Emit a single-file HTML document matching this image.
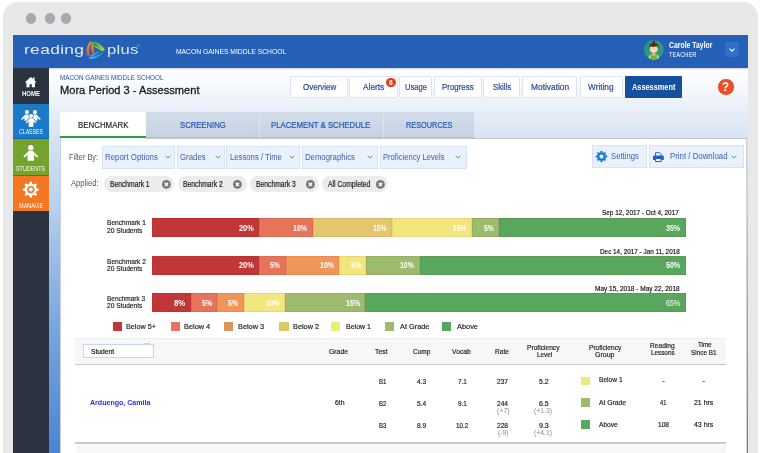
<!DOCTYPE html>
<html lang="en"><head><meta charset="utf-8"><title>Reading Plus - Assessment</title>
<style>
html,body{margin:0;padding:0;background:#fff;}
body{width:760px;height:453px;overflow:hidden;position:relative;font-family:"Liberation Sans",sans-serif;}
.b{position:absolute;box-sizing:border-box;}
.t{position:absolute;white-space:nowrap;line-height:1;transform-origin:0 0;font-family:"Liberation Sans",sans-serif;}
svg{position:absolute;overflow:visible;}
</style></head><body>
<div id="app" style="position:absolute;left:0;top:0;width:760px;height:453px;will-change:transform;">
<div class="b" style="left:3.10px;top:1.90px;width:754.90px;height:468.10px;background:#e8e8e8;border-radius:15px;"></div>
<div class="b" style="left:25.95px;top:13.30px;width:10.30px;height:10.30px;background:#a7a9ad;border-radius:50%;"></div>
<div class="b" style="left:44.55px;top:13.30px;width:10.30px;height:10.30px;background:#a7a9ad;border-radius:50%;"></div>
<div class="b" style="left:60.85px;top:13.30px;width:10.30px;height:10.30px;background:#a7a9ad;border-radius:50%;"></div>
<div class="b" style="left:13.00px;top:35.00px;width:735.00px;height:418.00px;background:#fff;background:linear-gradient(to bottom,#ffffff 33px,#fdfeff 40px,#d6e3f3 103px,#b5cfee 176px,#a4c4e8 201px,#74a4dd 301px,#4a85d3 418px);"></div>
<div class="b" style="left:48.50px;top:68.00px;width:699.50px;height:2.20px;background:transparent;background:linear-gradient(to bottom,rgba(60,70,90,0.25),rgba(60,70,90,0));"></div>
<div class="b" style="left:13.00px;top:35.00px;width:735.00px;height:33.00px;background:#2560b6;"></div>
<span class="t" style="left:24.19px;top:43px;font-size:13.3px;color:rgba(255,255,255,0.86);transform:scaleX(1.3091);letter-spacing:0.25px;">reading</span>
<span class="t" style="left:106.85px;top:43px;font-size:13.3px;color:rgba(255,255,255,0.86);transform:scaleX(1.2500);letter-spacing:0.25px;">plus</span>
<svg style="left:85.8px;top:40.9px" width="19" height="18.5" viewBox="0 0 38 37">
<defs>
<linearGradient id="lo" x1="0" y1="0" x2="0" y2="1"><stop offset="0" stop-color="#f9a01b"/><stop offset="1" stop-color="#ef4b23"/></linearGradient>
<linearGradient id="lg" x1="0" y1="0" x2="1" y2="0.6"><stop offset="0" stop-color="#1f9a48"/><stop offset="1" stop-color="#c6d92d"/></linearGradient>
<linearGradient id="lb" x1="1" y1="0" x2="0" y2="0.6"><stop offset="0" stop-color="#1c75bc"/><stop offset="1" stop-color="#35c0f0"/></linearGradient>
</defs>
<path d="M9 0.5 C2 8 -2 22 4 31 L8.500 29 C5 22 6 10 11.500 2 Z M12.500 1.500 C9 9 10 20 14 26.500 L18 24.500 C14.500 18 14 9 16 2.500 Z" fill="url(#lo)"/>
<path d="M12 0 C22 1.500 31.500 8 37.500 17 L35 19.500 C29 11.500 21 6.500 12.500 4.500 Z M13.500 7.500 C22 9 29 13 35.500 19.500 L33 21.500 C27.500 16.500 21 13 13.500 12 Z" fill="url(#lg)"/>
<path d="M37.500 18.500 C32 28.500 20 37 5.500 35.500 L8 31.800 C19 32.500 28 26.500 33 19 Z M27 20 C23 26.500 16 30.500 8 31.300 L10.500 27.600 C16 26.800 20.500 24 23 19.600 Z" fill="url(#lb)"/>
</svg>
<span class="t" style="left:175.70px;top:48px;font-size:7.4px;color:#ffffff;transform:scaleX(0.9125);">MACON GAINES MIDDLE SCHOOL</span>
<span class="t" style="left:136.90px;top:46px;font-size:2.6px;color:rgba(255,255,255,0.6);transform:scaleX(1.4000);">®</span>
<svg style="left:643.9px;top:40.1px" width="19.6" height="19.6" viewBox="0 0 40 40">
<defs><clipPath id="av"><circle cx="20" cy="20" r="20"/></clipPath></defs>
<circle cx="20" cy="20" r="20" fill="#2a9a85"/>
<g clip-path="url(#av)">
<circle cx="20" cy="4" r="2.800" fill="#5b2d1b"/>
<path d="M9.500 36 C9.500 31 12 29.500 15 29.500 L25 29.500 C28 29.500 30.500 31 30.500 36 L30.500 41 L9.500 41 Z" fill="#f1c9a0"/>
<path d="M13 41 L13 31 C13 30 14 29.600 15 29.600 C16 32.500 24 32.500 25 29.600 C26 29.600 27 30 27 31 L27 41 Z" fill="#6fb83a"/>
<path d="M17.200 24 L22.800 24 L22.800 29.800 C22 31.500 18 31.500 17.200 29.800 Z" fill="#e9b98f"/>
<ellipse cx="20" cy="18.200" rx="8.400" ry="7.400" fill="#f6d3ad"/>
<path d="M10.800 18.500 C9.500 9 14.500 5 20 5 C25.500 5 30.500 9 29.200 18.500 C28.500 15.500 27 13.500 25.500 12.800 C22 14.500 16 14.500 14.200 13 C12.800 14 11.500 15.800 10.800 18.500 Z" fill="#5b2d1b"/>
<path d="M17.800 22 C19 23.300 21 23.300 22.200 22 C21 22.600 19 22.600 17.800 22 Z" fill="#fff" stroke="#fff" stroke-width="0.6"/>
</g></svg>
<span class="t" style="left:669.00px;top:41px;font-size:8.4px;color:#ffffff;font-weight:700;transform:scaleX(0.8208);">Carole Taylor</span>
<span class="t" style="left:669.00px;top:52px;font-size:6.6px;color:#ffffff;transform:scaleX(0.8710);">TEACHER</span>
<div class="b" style="left:724.80px;top:42.30px;width:14.20px;height:14.70px;background:#2f70c8;border-radius:2px;"></div>
<svg style="left:728.9px;top:47.6px" width="6" height="4" viewBox="0 0 6 4"><path d="M0.6 0.7 L3 3.100 L5.400 0.7" fill="none" stroke="#fff" stroke-width="1.100"/></svg>
<div class="b" style="left:13.00px;top:68.00px;width:35.50px;height:385.00px;background:#2c323f;"></div>
<div class="b" style="left:13.00px;top:103.50px;width:35.50px;height:35.80px;background:#1b79c9;border-bottom:1px solid #1565a9;"></div>
<div class="b" style="left:13.00px;top:139.30px;width:35.50px;height:36.30px;background:#76a22e;border-bottom:1px solid #4f7a2a;"></div>
<div class="b" style="left:13.00px;top:175.60px;width:35.50px;height:35.50px;background:#f47721;"></div>
<svg style="left:24.6px;top:76.8px" width="11.4" height="10.200" viewBox="0 0 28 25"><path d="M14 0 L19.500 5 L19.500 1.500 L23.500 1.500 L23.500 8.600 L28 12.700 L26.600 14.300 L24.500 12.600 L24.500 25 L16.800 25 L16.800 17.500 L11.200 17.500 L11.200 25 L3.500 25 L3.500 12.600 L1.400 14.300 L0 12.700 Z" fill="#fff"/></svg>
<span class="t" style="left:21.90px;top:91px;font-size:6.4px;color:#ffffff;font-weight:700;transform:scaleX(0.9421);">HOME</span>
<svg style="left:13px;top:103.5px" width="35.700" height="36" viewBox="0 0 35.700 36"><g transform="translate(13.9,6.0) scale(0.95)" fill="#fff"><circle cx="0" cy="2.200" r="2.200"/><path d="M-1.700 4.700 L1.700 4.700 L6.200 9.500 L5.100 10.500 L2.700 8.100 L2.700 11.2 L-2.700 11.2 L-2.700 8.100 L-5.100 10.500 L-6.200 9.500 Z"/></g><g transform="translate(21.9,6.0) scale(0.95)" fill="#fff"><circle cx="0" cy="2.200" r="2.200"/><path d="M-1.700 4.700 L1.700 4.700 L6.200 9.500 L5.100 10.500 L2.700 8.100 L2.700 11.2 L-2.700 11.2 L-2.700 8.100 L-5.100 10.500 L-6.200 9.500 Z"/></g><g stroke="#1b79c9" stroke-width="1.400"><g transform="translate(18.1,10.1) scale(0.88)" fill="#fff"><circle cx="0" cy="2.200" r="2.200"/><path d="M-1.700 4.700 L1.700 4.700 L6.200 9.500 L5.100 10.500 L2.700 8.100 L2.700 14.4 L-2.700 14.4 L-2.700 8.100 L-5.100 10.500 L-6.200 9.500 Z"/></g></g><g transform="translate(18.1,10.1) scale(0.88)" fill="#fff"><circle cx="0" cy="2.200" r="2.200"/><path d="M-1.700 4.700 L1.700 4.700 L6.200 9.500 L5.100 10.500 L2.700 8.100 L2.700 14.4 L-2.700 14.4 L-2.700 8.100 L-5.100 10.500 L-6.200 9.500 Z"/></g></svg>
<span class="t" style="left:19.10px;top:129px;font-size:6.6px;color:#ffffff;transform:scaleX(0.7867);">CLASSES</span>
<svg style="left:13px;top:139.3px" width="35.700" height="36" viewBox="0 0 35.700 36"><g transform="translate(17.8,6.0) scale(1.2)" fill="#fff"><circle cx="0" cy="2.200" r="2.200"/><path d="M-1.700 4.700 L1.700 4.700 L6.200 9.500 L5.100 10.500 L2.700 8.100 L2.700 13.1 L-2.700 13.1 L-2.700 8.100 L-5.100 10.500 L-6.200 9.500 Z"/></g></svg>
<span class="t" style="left:16.40px;top:166px;font-size:6.6px;color:#ffffff;transform:scaleX(0.8171);">STUDENTS</span>
<svg style="left:13px;top:175.600px" width="35.700" height="36" viewBox="0 0 35.700 36"><path d="M16.40 7.77 L16.75 5.77 L18.85 5.77 L19.20 7.77 L20.93 8.48 L22.59 7.32 L24.08 8.81 L22.92 10.47 L23.63 12.20 L25.63 12.55 L25.63 14.65 L23.63 15.00 L22.92 16.73 L24.08 18.39 L22.59 19.88 L20.93 18.72 L19.20 19.43 L18.85 21.43 L16.75 21.43 L16.40 19.43 L14.67 18.72 L13.01 19.88 L11.52 18.39 L12.68 16.73 L11.97 15.00 L9.97 14.65 L9.97 12.55 L11.97 12.20 L12.68 10.47 L11.52 8.81 L13.01 7.32 L14.67 8.48 Z" fill="#fff"/><circle cx="17.8" cy="13.6" r="3.700" fill="#f47721"/><circle cx="17.8" cy="13.6" r="2.000" fill="#fff"/></svg>
<span class="t" style="left:19.00px;top:203px;font-size:6.6px;color:#ffffff;transform:scaleX(0.8429);">MANAGE</span>
<span class="t" style="left:59.60px;top:75px;font-size:6.9px;color:#2450ad;transform:scaleX(0.9188);">MACON GAINES MIDDLE SCHOOL</span>
<span class="t" style="left:59.60px;top:85px;font-size:10.6px;color:#1a1a1a;transform:scaleX(1.0481);-webkit-text-stroke:0.3px #1a1a1a;">Mora Period 3 - Assessment</span>
<div class="b" style="left:290.40px;top:75.60px;width:57.20px;height:22.40px;background:#ffffff;border:1px solid #dae4f3;border-radius:2px;"></div>
<span class="t" style="left:302.60px;top:83px;font-size:8.4px;color:#2b4b98;transform:scaleX(0.9543);-webkit-text-stroke:0.2px #2b4b98;">Overview</span>
<div class="b" style="left:349.20px;top:75.60px;width:48.40px;height:22.40px;background:#ffffff;border:1px solid #dae4f3;border-radius:2px;"></div>
<span class="t" style="left:363.00px;top:83px;font-size:8.4px;color:#2b4b98;transform:scaleX(0.9905);-webkit-text-stroke:0.2px #2b4b98;">Alerts</span>
<div class="b" style="left:399.20px;top:75.60px;width:33.20px;height:22.40px;background:#ffffff;border:1px solid #dae4f3;border-radius:2px;"></div>
<span class="t" style="left:405.20px;top:83px;font-size:8.4px;color:#2b4b98;transform:scaleX(0.9083);-webkit-text-stroke:0.2px #2b4b98;">Usage</span>
<div class="b" style="left:434.20px;top:75.60px;width:47.60px;height:22.40px;background:#ffffff;border:1px solid #dae4f3;border-radius:2px;"></div>
<span class="t" style="left:442.40px;top:83px;font-size:8.4px;color:#2b4b98;transform:scaleX(0.9455);-webkit-text-stroke:0.2px #2b4b98;">Progress</span>
<div class="b" style="left:483.40px;top:75.60px;width:36.20px;height:22.40px;background:#ffffff;border:1px solid #dae4f3;border-radius:2px;"></div>
<span class="t" style="left:493.00px;top:83px;font-size:8.4px;color:#2b4b98;transform:scaleX(0.9263);-webkit-text-stroke:0.2px #2b4b98;">Skills</span>
<div class="b" style="left:522.40px;top:75.60px;width:55.00px;height:22.40px;background:#ffffff;border:1px solid #dae4f3;border-radius:2px;"></div>
<span class="t" style="left:531.00px;top:83px;font-size:8.4px;color:#2b4b98;transform:scaleX(1.0000);-webkit-text-stroke:0.2px #2b4b98;">Motivation</span>
<div class="b" style="left:579.60px;top:75.60px;width:43.00px;height:22.40px;background:#ffffff;border:1px solid #dae4f3;border-radius:2px;"></div>
<span class="t" style="left:588.40px;top:83px;font-size:8.4px;color:#2b4b98;transform:scaleX(0.9846);-webkit-text-stroke:0.2px #2b4b98;">Writing</span>
<div class="b" style="left:624.80px;top:76.20px;width:57.20px;height:21.40px;background:#15509e;border-radius:1px;"></div>
<span class="t" style="left:632.00px;top:84px;font-size:8.2px;color:#ffffff;font-weight:700;transform:scaleX(0.9000);">Assessment</span>
<div class="b" style="left:386.40px;top:77.80px;width:9.60px;height:9.60px;background:#e63e15;border-radius:50%;"></div>
<span class="t" style="left:389.30px;top:80px;font-size:6.9px;color:#ffffff;font-weight:700;transform:scaleX(0.9500);">8</span>
<div class="b" style="left:717.40px;top:78.30px;width:17.40px;height:17.40px;background:#e9502a;border-radius:50%;border:1px solid #fff;"></div>
<span class="t" style="left:722.48px;top:81px;font-size:12.6px;color:#ffffff;font-weight:700;transform:scaleX(0.9167);">?</span>
<div class="b" style="left:59.50px;top:112.00px;width:86.90px;height:26.40px;background:#ffffff;border-bottom:2.600px solid #2f9e3c;"></div>
<div class="b" style="left:146.40px;top:112.00px;width:328.00px;height:26.40px;background:#ccd7e5;background:linear-gradient(to bottom,#d3dde9,#c6d2e3);border-bottom:1px solid #b4bfcf;"></div>
<div class="b" style="left:258.60px;top:112.00px;width:1.00px;height:25.50px;background:#dbe4f0;"></div>
<div class="b" style="left:383.10px;top:112.00px;width:1.00px;height:25.50px;background:#dbe4f0;"></div>
<span class="t" style="left:77.60px;top:121px;font-size:8.3px;color:#222222;transform:scaleX(0.9509);-webkit-text-stroke:0.15px #222;">BENCHMARK</span>
<span class="t" style="left:180.00px;top:121px;font-size:8.3px;color:#2657b6;transform:scaleX(0.9265);-webkit-text-stroke:0.2px #2657b6;">SCREENING</span>
<span class="t" style="left:271.40px;top:121px;font-size:8.3px;color:#2657b6;transform:scaleX(0.9377);-webkit-text-stroke:0.2px #2657b6;">PLACEMENT &amp; SCHEDULE</span>
<span class="t" style="left:406.00px;top:121px;font-size:8.3px;color:#2657b6;transform:scaleX(0.8846);-webkit-text-stroke:0.2px #2657b6;">RESOURCES</span>
<div class="b" style="left:59.50px;top:138.40px;width:687.30px;height:314.60px;background:#ffffff;border-left:1px solid #c9d0da;border-right:1px solid #cfd4db;"></div>
<div class="b" style="left:146.40px;top:137.90px;width:600.30px;height:0.80px;background:#c2c5c9;"></div>
<span class="t" style="left:69.00px;top:153px;font-size:8.4px;color:#555555;transform:scaleX(0.8788);">Filter By:</span>
<div class="b" style="left:102.40px;top:146.20px;width:72.80px;height:22.60px;background:#e9f1fc;border:1px solid #d4e2f6;"></div>
<span class="t" style="left:105.40px;top:153px;font-size:8.4px;color:#3f60ae;transform:scaleX(0.9393);">Report Options</span>
<svg style="left:164.60px;top:155.30px" width="6" height="4" viewBox="0 0 6 4"><path d="M0.6 0.7 L3 3.100 L5.400 0.7" fill="none" stroke="#4aa84e" stroke-width="0.950"/></svg>
<div class="b" style="left:177.40px;top:146.20px;width:47.20px;height:22.60px;background:#e9f1fc;border:1px solid #d4e2f6;"></div>
<span class="t" style="left:180.00px;top:153px;font-size:8.4px;color:#3f60ae;transform:scaleX(0.9333);">Grades</span>
<svg style="left:214.60px;top:155.30px" width="6" height="4" viewBox="0 0 6 4"><path d="M0.6 0.7 L3 3.100 L5.400 0.7" fill="none" stroke="#4aa84e" stroke-width="0.950"/></svg>
<div class="b" style="left:226.40px;top:146.20px;width:73.60px;height:22.60px;background:#e9f1fc;border:1px solid #d4e2f6;"></div>
<span class="t" style="left:229.60px;top:153px;font-size:8.4px;color:#3f60ae;transform:scaleX(0.9214);">Lessons / Time</span>
<svg style="left:289.40px;top:155.30px" width="6" height="4" viewBox="0 0 6 4"><path d="M0.6 0.7 L3 3.100 L5.400 0.7" fill="none" stroke="#4aa84e" stroke-width="0.950"/></svg>
<div class="b" style="left:302.00px;top:146.20px;width:75.60px;height:22.60px;background:#e9f1fc;border:1px solid #d4e2f6;"></div>
<span class="t" style="left:305.00px;top:153px;font-size:8.4px;color:#3f60ae;transform:scaleX(0.9259);">Demographics</span>
<svg style="left:367.00px;top:155.30px" width="6" height="4" viewBox="0 0 6 4"><path d="M0.6 0.7 L3 3.100 L5.400 0.7" fill="none" stroke="#4aa84e" stroke-width="0.950"/></svg>
<div class="b" style="left:380.00px;top:146.20px;width:87.00px;height:22.60px;background:#e9f1fc;border:1px solid #d4e2f6;"></div>
<span class="t" style="left:383.00px;top:153px;font-size:8.4px;color:#3f60ae;transform:scaleX(0.9104);">Proficiency Levels</span>
<svg style="left:455.40px;top:155.30px" width="6" height="4" viewBox="0 0 6 4"><path d="M0.6 0.7 L3 3.100 L5.400 0.7" fill="none" stroke="#4aa84e" stroke-width="0.950"/></svg>
<div class="b" style="left:591.60px;top:145.20px;width:55.20px;height:22.60px;background:#e9f1fc;border:1px solid #d4e2f6;"></div>
<svg style="left:596.000px;top:150.900px" width="11" height="11" viewBox="0 0 11 11"><path d="M4.52 1.42 L4.77 0.05 L6.23 0.05 L6.48 1.42 L7.69 1.92 L8.84 1.13 L9.87 2.16 L9.08 3.31 L9.58 4.52 L10.95 4.77 L10.95 6.23 L9.58 6.48 L9.08 7.69 L9.87 8.84 L8.84 9.87 L7.69 9.08 L6.48 9.58 L6.23 10.95 L4.77 10.95 L4.52 9.58 L3.31 9.08 L2.16 9.87 L1.13 8.84 L1.92 7.69 L1.42 6.48 L0.05 6.23 L0.05 4.77 L1.42 4.52 L1.92 3.31 L1.13 2.16 L2.16 1.13 L3.31 1.92 Z" fill="#1a7fd1" stroke="#1a7fd1" stroke-width="0.5" stroke-linejoin="round"/><circle cx="5.5" cy="5.5" r="2.000" fill="#e9f1fc"/></svg>
<span class="t" style="left:610.90px;top:153px;font-size:8.2px;color:#3f60ae;transform:scaleX(0.9414);">Settings</span>
<div class="b" style="left:648.70px;top:145.20px;width:95.10px;height:22.60px;background:#e9f1fc;border:1px solid #d4e2f6;"></div>
<svg style="left:652.900px;top:151.500px" width="10.800" height="10.200" viewBox="0 0 22 20">
<path d="M5.200 7 L5.200 1 L14 1 L16.800 3.800 L16.800 7" fill="#f4f8fe" stroke="#1f5fc0" stroke-width="2"/>
<path d="M2.500 7 L19.500 7 Q22 7 22 9.500 L22 16 L0 16 L0 9.500 Q0 7 2.500 7 Z" fill="#1f5fc0"/>
<path d="M5.200 13 L16.800 13 L16.800 19 L5.200 19 Z" fill="#f4f8fe" stroke="#1f5fc0" stroke-width="2"/>
</svg>
<span class="t" style="left:669.50px;top:153px;font-size:8.2px;color:#3f60ae;transform:scaleX(0.9583);">Print / Download</span>
<svg style="left:731.40px;top:154.50px" width="6" height="4" viewBox="0 0 6 4"><path d="M0.6 0.7 L3 3.100 L5.400 0.7" fill="none" stroke="#4aa84e" stroke-width="0.950"/></svg>
<span class="t" style="left:71.00px;top:180px;font-size:8.2px;color:#555555;transform:scaleX(0.9310);">Applied:</span>
<div class="b" style="left:104.00px;top:176.20px;width:70.40px;height:15.40px;background:#ececec;border-radius:8px;"></div>
<span class="t" style="left:109.60px;top:181px;font-size:8.2px;color:#1a1a1a;transform:scaleX(0.8208);-webkit-text-stroke:0.18px #1a1a1a;">Benchmark 1</span>
<svg style="left:161.60px;top:179.80px" width="8.800" height="8.800" viewBox="0 0 10 10"><circle cx="5" cy="5" r="5" fill="#757575"/><path d="M3.100 3.100 L6.900 6.900 M6.900 3.100 L3.100 6.900" stroke="#fff" stroke-width="1.500"/></svg>
<div class="b" style="left:178.00px;top:176.20px;width:69.00px;height:15.40px;background:#ececec;border-radius:8px;"></div>
<span class="t" style="left:183.40px;top:181px;font-size:8.2px;color:#1a1a1a;transform:scaleX(0.8250);-webkit-text-stroke:0.18px #1a1a1a;">Benchmark 2</span>
<svg style="left:233.20px;top:179.80px" width="8.800" height="8.800" viewBox="0 0 10 10"><circle cx="5" cy="5" r="5" fill="#757575"/><path d="M3.100 3.100 L6.900 6.900 M6.900 3.100 L3.100 6.900" stroke="#fff" stroke-width="1.500"/></svg>
<div class="b" style="left:250.40px;top:176.20px;width:68.60px;height:15.40px;background:#ececec;border-radius:8px;"></div>
<span class="t" style="left:256.00px;top:181px;font-size:8.2px;color:#1a1a1a;transform:scaleX(0.8250);-webkit-text-stroke:0.18px #1a1a1a;">Benchmark 3</span>
<svg style="left:305.60px;top:179.80px" width="8.800" height="8.800" viewBox="0 0 10 10"><circle cx="5" cy="5" r="5" fill="#757575"/><path d="M3.100 3.100 L6.900 6.900 M6.900 3.100 L3.100 6.900" stroke="#fff" stroke-width="1.500"/></svg>
<div class="b" style="left:322.00px;top:176.20px;width:66.00px;height:15.40px;background:#ececec;border-radius:8px;"></div>
<span class="t" style="left:327.60px;top:181px;font-size:8.2px;color:#1a1a1a;transform:scaleX(0.8314);-webkit-text-stroke:0.18px #1a1a1a;">All Completed</span>
<svg style="left:375.60px;top:179.80px" width="8.800" height="8.800" viewBox="0 0 10 10"><circle cx="5" cy="5" r="5" fill="#757575"/><path d="M3.100 3.100 L6.900 6.900 M6.900 3.100 L3.100 6.900" stroke="#fff" stroke-width="1.500"/></svg>
<div class="b" style="left:152.40px;top:217.60px;width:106.20px;height:19.00px;background:#c13636;box-shadow:inset 0 0 0 1px rgba(120,0,0,0.07);"></div>
<span class="t" style="left:239.00px;top:223px;font-size:9.6px;color:#ffffff;font-weight:700;transform:scaleX(0.7684);">20%</span>
<div class="b" style="left:258.60px;top:217.60px;width:54.00px;height:19.00px;background:#e5745b;box-shadow:inset 0 0 0 1px rgba(120,0,0,0.07);"></div>
<span class="t" style="left:293.00px;top:223px;font-size:9.6px;color:#ffffff;font-weight:700;transform:scaleX(0.7368);">10%</span>
<div class="b" style="left:312.60px;top:217.60px;width:79.40px;height:19.00px;background:#e3c66d;box-shadow:inset 0 0 0 1px rgba(120,0,0,0.07);"></div>
<span class="t" style="left:373.00px;top:223px;font-size:9.6px;color:#ffffff;font-weight:700;transform:scaleX(0.7053);">15%</span>
<div class="b" style="left:392.00px;top:217.60px;width:80.40px;height:19.00px;background:#f4e67f;box-shadow:inset 0 0 0 1px rgba(120,0,0,0.07);"></div>
<span class="t" style="left:453.00px;top:223px;font-size:9.6px;color:#ffffff;font-weight:700;transform:scaleX(0.7053);">15%</span>
<div class="b" style="left:472.40px;top:217.60px;width:26.60px;height:19.00px;background:#9dbb6d;box-shadow:inset 0 0 0 1px rgba(120,0,0,0.07);"></div>
<span class="t" style="left:483.60px;top:223px;font-size:9.6px;color:#ffffff;font-weight:700;transform:scaleX(0.7143);">5%</span>
<div class="b" style="left:499.00px;top:217.60px;width:187.00px;height:19.00px;background:#59a65d;box-shadow:inset 0 0 0 1px rgba(120,0,0,0.07);"></div>
<span class="t" style="left:666.00px;top:223px;font-size:9.6px;color:#ffffff;font-weight:700;transform:scaleX(0.7368);">35%</span>
<div class="b" style="left:152.40px;top:255.60px;width:106.20px;height:19.40px;background:#c13636;box-shadow:inset 0 0 0 1px rgba(120,0,0,0.07);"></div>
<span class="t" style="left:239.00px;top:260px;font-size:9.6px;color:#ffffff;font-weight:700;transform:scaleX(0.7684);">20%</span>
<div class="b" style="left:258.60px;top:255.60px;width:27.40px;height:19.40px;background:#e5745b;box-shadow:inset 0 0 0 1px rgba(120,0,0,0.07);"></div>
<span class="t" style="left:270.00px;top:260px;font-size:9.6px;color:#ffffff;font-weight:700;transform:scaleX(0.7143);">5%</span>
<div class="b" style="left:286.00px;top:255.60px;width:53.00px;height:19.40px;background:#f0965b;box-shadow:inset 0 0 0 1px rgba(120,0,0,0.07);"></div>
<span class="t" style="left:320.00px;top:260px;font-size:9.6px;color:#ffffff;font-weight:700;transform:scaleX(0.7368);">10%</span>
<div class="b" style="left:339.00px;top:255.60px;width:27.00px;height:19.40px;background:#f4e67f;box-shadow:inset 0 0 0 1px rgba(120,0,0,0.07);"></div>
<span class="t" style="left:350.60px;top:260px;font-size:9.6px;color:#ffffff;font-weight:700;transform:scaleX(0.7429);">5%</span>
<div class="b" style="left:366.00px;top:255.60px;width:53.60px;height:19.40px;background:#9dbb6d;box-shadow:inset 0 0 0 1px rgba(120,0,0,0.07);"></div>
<span class="t" style="left:400.00px;top:260px;font-size:9.6px;color:#ffffff;font-weight:700;transform:scaleX(0.7158);">10%</span>
<div class="b" style="left:419.60px;top:255.60px;width:266.40px;height:19.40px;background:#59a65d;box-shadow:inset 0 0 0 1px rgba(120,0,0,0.07);"></div>
<span class="t" style="left:666.00px;top:260px;font-size:9.6px;color:#ffffff;font-weight:700;transform:scaleX(0.7368);">50%</span>
<div class="b" style="left:152.40px;top:292.60px;width:38.60px;height:19.80px;background:#c13636;box-shadow:inset 0 0 0 1px rgba(120,0,0,0.07);"></div>
<span class="t" style="left:173.60px;top:298px;font-size:9.6px;color:#ffffff;font-weight:700;transform:scaleX(0.8143);">8%</span>
<div class="b" style="left:191.00px;top:292.60px;width:26.40px;height:19.80px;background:#e5745b;box-shadow:inset 0 0 0 1px rgba(120,0,0,0.07);"></div>
<span class="t" style="left:201.60px;top:298px;font-size:9.6px;color:#ffffff;font-weight:700;transform:scaleX(0.7429);">5%</span>
<div class="b" style="left:217.40px;top:292.60px;width:26.60px;height:19.80px;background:#f0965b;box-shadow:inset 0 0 0 1px rgba(120,0,0,0.07);"></div>
<span class="t" style="left:228.40px;top:298px;font-size:9.6px;color:#ffffff;font-weight:700;transform:scaleX(0.7286);">5%</span>
<div class="b" style="left:244.00px;top:292.60px;width:41.00px;height:19.80px;background:#f4e67f;box-shadow:inset 0 0 0 1px rgba(120,0,0,0.07);"></div>
<span class="t" style="left:265.60px;top:298px;font-size:9.6px;color:#ffffff;font-weight:700;transform:scaleX(0.7053);">10%</span>
<div class="b" style="left:285.00px;top:292.60px;width:80.00px;height:19.80px;background:#9dbb6d;box-shadow:inset 0 0 0 1px rgba(120,0,0,0.07);"></div>
<span class="t" style="left:345.60px;top:298px;font-size:9.6px;color:#ffffff;font-weight:700;transform:scaleX(0.7579);">15%</span>
<div class="b" style="left:365.00px;top:292.60px;width:321.00px;height:19.80px;background:#59a65d;box-shadow:inset 0 0 0 1px rgba(120,0,0,0.07);"></div>
<span class="t" style="left:666.00px;top:298px;font-size:9.6px;color:#ffffff;transform:scaleX(0.7368);">65%</span>
<span class="t" style="left:106.60px;top:219px;font-size:7.4px;color:#222222;transform:scaleX(0.8930);-webkit-text-stroke:0.18px #222222;">Benchmark 1</span>
<span class="t" style="left:106.60px;top:227px;font-size:7.4px;color:#222222;transform:scaleX(0.8974);-webkit-text-stroke:0.18px #222222;">20 Students</span>
<span class="t" style="left:106.60px;top:258px;font-size:7.4px;color:#222222;transform:scaleX(0.8930);-webkit-text-stroke:0.18px #222222;">Benchmark 2</span>
<span class="t" style="left:106.60px;top:265px;font-size:7.4px;color:#222222;transform:scaleX(0.8974);-webkit-text-stroke:0.18px #222222;">20 Students</span>
<span class="t" style="left:106.60px;top:295px;font-size:7.4px;color:#222222;transform:scaleX(0.8727);-webkit-text-stroke:0.18px #222222;">Benchmark 3</span>
<span class="t" style="left:106.60px;top:302px;font-size:7.4px;color:#222222;transform:scaleX(0.8974);-webkit-text-stroke:0.18px #222222;">20 Students</span>
<span class="t" style="left:602.00px;top:209px;font-size:7.4px;color:#111111;transform:scaleX(0.8652);-webkit-text-stroke:0.18px #111111;">Sep 12, 2017 - Oct 4, 2017</span>
<span class="t" style="left:600.00px;top:248px;font-size:7.4px;color:#111111;transform:scaleX(0.8602);-webkit-text-stroke:0.18px #111111;">Dec 14, 2017 - Jan 11, 2018</span>
<span class="t" style="left:595.40px;top:285px;font-size:7.4px;color:#111111;transform:scaleX(0.8813);-webkit-text-stroke:0.18px #111111;">May 15, 2018 - May 22, 2018</span>
<div class="b" style="left:112.60px;top:322.00px;width:9.30px;height:9.20px;background:#c13636;"></div>
<span class="t" style="left:126.40px;top:323px;font-size:7.6px;color:#222222;transform:scaleX(0.9548);-webkit-text-stroke:0.18px #222222;">Below 5+</span>
<div class="b" style="left:170.60px;top:322.00px;width:9.30px;height:9.20px;background:#e5745b;"></div>
<span class="t" style="left:184.40px;top:323px;font-size:7.6px;color:#222222;transform:scaleX(0.9704);-webkit-text-stroke:0.18px #222222;">Below 4</span>
<div class="b" style="left:223.60px;top:322.00px;width:9.30px;height:9.20px;background:#d9975b;"></div>
<span class="t" style="left:238.00px;top:323px;font-size:7.6px;color:#222222;transform:scaleX(0.9630);-webkit-text-stroke:0.18px #222222;">Below 3</span>
<div class="b" style="left:279.40px;top:322.00px;width:9.30px;height:9.20px;background:#d9c969;"></div>
<span class="t" style="left:292.60px;top:323px;font-size:7.6px;color:#222222;transform:scaleX(0.9630);-webkit-text-stroke:0.18px #222222;">Below 2</span>
<div class="b" style="left:330.60px;top:322.00px;width:9.30px;height:9.20px;background:#e7ef79;"></div>
<span class="t" style="left:346.00px;top:323px;font-size:7.6px;color:#222222;transform:scaleX(0.9259);-webkit-text-stroke:0.18px #222222;">Below 1</span>
<div class="b" style="left:384.60px;top:322.00px;width:9.30px;height:9.20px;background:#9dbb6d;"></div>
<span class="t" style="left:399.60px;top:323px;font-size:7.6px;color:#222222;transform:scaleX(0.9667);-webkit-text-stroke:0.18px #222222;">At Grade</span>
<div class="b" style="left:442.00px;top:322.00px;width:9.30px;height:9.20px;background:#59a65d;"></div>
<span class="t" style="left:456.60px;top:323px;font-size:7.6px;color:#222222;transform:scaleX(0.9714);-webkit-text-stroke:0.18px #222222;">Above</span>
<div class="b" style="left:75.30px;top:337.60px;width:650.70px;height:27.00px;background:#f7f7f7;border-top:1px solid #ededed;border-bottom:1.500px solid #c6c6c6;"></div>
<div class="b" style="left:143.90px;top:343.00px;width:5.90px;height:1.20px;background:#f3c6c6;"></div>
<div class="b" style="left:83.30px;top:344.10px;width:70.50px;height:13.60px;background:#ffffff;border:1.300px solid #c5d7ee;"></div>
<span class="t" style="left:90.60px;top:348px;font-size:7.2px;color:#111111;transform:scaleX(0.9360);-webkit-text-stroke:0.18px #111111;">Student</span>
<span class="t" style="left:328.60px;top:348px;font-size:7.3px;color:#222222;transform:scaleX(0.9400);-webkit-text-stroke:0.18px #222222;">Grade</span>
<span class="t" style="left:375.40px;top:348px;font-size:7.3px;color:#222222;transform:scaleX(0.9385);-webkit-text-stroke:0.18px #222222;">Test</span>
<span class="t" style="left:412.60px;top:348px;font-size:7.3px;color:#222222;transform:scaleX(0.8900);-webkit-text-stroke:0.18px #222222;">Comp</span>
<span class="t" style="left:452.20px;top:348px;font-size:7.3px;color:#222222;transform:scaleX(0.9250);-webkit-text-stroke:0.18px #222222;">Vocab</span>
<span class="t" style="left:494.80px;top:348px;font-size:7.3px;color:#222222;transform:scaleX(0.9067);-webkit-text-stroke:0.18px #222222;">Rate</span>
<span class="t" style="left:527.40px;top:344px;font-size:7.3px;color:#222222;transform:scaleX(0.9111);-webkit-text-stroke:0.18px #222222;">Proficiency</span>
<span class="t" style="left:537.00px;top:351px;font-size:7.3px;color:#222222;transform:scaleX(0.8706);-webkit-text-stroke:0.18px #222222;">Level</span>
<span class="t" style="left:588.50px;top:344px;font-size:7.3px;color:#222222;transform:scaleX(0.9028);-webkit-text-stroke:0.18px #222222;">Proficiency</span>
<span class="t" style="left:595.00px;top:351px;font-size:7.3px;color:#222222;transform:scaleX(0.9600);-webkit-text-stroke:0.18px #222222;">Group</span>
<span class="t" style="left:650.00px;top:342px;font-size:7.3px;color:#222222;transform:scaleX(0.9074);-webkit-text-stroke:0.18px #222222;">Reading</span>
<span class="t" style="left:650.60px;top:349px;font-size:7.3px;color:#222222;transform:scaleX(0.8667);-webkit-text-stroke:0.18px #222222;">Lessons</span>
<span class="t" style="left:697.60px;top:341px;font-size:7.3px;color:#222222;transform:scaleX(0.8500);-webkit-text-stroke:0.18px #222222;">Time</span>
<span class="t" style="left:691.30px;top:349px;font-size:7.3px;color:#222222;transform:scaleX(0.8724);-webkit-text-stroke:0.18px #222222;">Since B1</span>
<span class="t" style="left:90.40px;top:399px;font-size:7.5px;color:#2a2af0;font-weight:700;transform:scaleX(0.9406);">Arduengo, Camila</span>
<span class="t" style="left:334.60px;top:399px;font-size:7.3px;color:#222222;transform:scaleX(0.9400);-webkit-text-stroke:0.18px #222222;">6th</span>
<span class="t" style="left:378.60px;top:378px;font-size:7.3px;color:#222222;transform:scaleX(0.8222);-webkit-text-stroke:0.18px #222222;">B1</span>
<span class="t" style="left:417.00px;top:378px;font-size:7.3px;color:#222222;transform:scaleX(0.9000);-webkit-text-stroke:0.18px #222222;">4.3</span>
<span class="t" style="left:457.60px;top:378px;font-size:7.3px;color:#222222;transform:scaleX(0.8700);-webkit-text-stroke:0.18px #222222;">7.1</span>
<span class="t" style="left:497.00px;top:378px;font-size:7.3px;color:#222222;transform:scaleX(0.9083);-webkit-text-stroke:0.18px #222222;">237</span>
<span class="t" style="left:539.00px;top:378px;font-size:7.3px;color:#222222;transform:scaleX(0.9600);-webkit-text-stroke:0.18px #222222;">5.2</span>
<span class="t" style="left:378.60px;top:400px;font-size:7.3px;color:#222222;transform:scaleX(0.8222);-webkit-text-stroke:0.18px #222222;">B2</span>
<span class="t" style="left:417.00px;top:400px;font-size:7.3px;color:#222222;transform:scaleX(0.9000);-webkit-text-stroke:0.18px #222222;">5.4</span>
<span class="t" style="left:457.60px;top:400px;font-size:7.3px;color:#222222;transform:scaleX(0.8700);-webkit-text-stroke:0.18px #222222;">9.1</span>
<span class="t" style="left:497.00px;top:400px;font-size:7.3px;color:#222222;transform:scaleX(0.9083);-webkit-text-stroke:0.18px #222222;">244</span>
<span class="t" style="left:539.00px;top:400px;font-size:7.3px;color:#222222;transform:scaleX(0.9600);-webkit-text-stroke:0.18px #222222;">6.5</span>
<span class="t" style="left:378.60px;top:422px;font-size:7.3px;color:#222222;transform:scaleX(0.8222);-webkit-text-stroke:0.18px #222222;">B3</span>
<span class="t" style="left:417.00px;top:422px;font-size:7.3px;color:#222222;transform:scaleX(0.9000);-webkit-text-stroke:0.18px #222222;">8.9</span>
<span class="t" style="left:456.30px;top:422px;font-size:7.3px;color:#222222;transform:scaleX(0.8714);-webkit-text-stroke:0.18px #222222;">10.2</span>
<span class="t" style="left:497.00px;top:422px;font-size:7.3px;color:#222222;transform:scaleX(0.9083);-webkit-text-stroke:0.18px #222222;">228</span>
<span class="t" style="left:539.00px;top:422px;font-size:7.3px;color:#222222;transform:scaleX(0.9600);-webkit-text-stroke:0.18px #222222;">9.3</span>
<span class="t" style="left:496.50px;top:408px;font-size:6.6px;color:#8a8a8a;transform:scaleX(1.0583);">(+7)</span>
<span class="t" style="left:533.60px;top:408px;font-size:6.6px;color:#8a8a8a;transform:scaleX(1.0412);">(+1.3)</span>
<span class="t" style="left:498.40px;top:430px;font-size:6.6px;color:#8a8a8a;transform:scaleX(1.0300);">(-9)</span>
<span class="t" style="left:534.20px;top:430px;font-size:6.6px;color:#8a8a8a;transform:scaleX(1.0353);">(+4.1)</span>
<div class="b" style="left:580.90px;top:376.60px;width:8.90px;height:8.60px;background:#e7ef79;"></div>
<span class="t" style="left:599.30px;top:376px;font-size:7.3px;color:#222222;transform:scaleX(0.9077);-webkit-text-stroke:0.18px #222222;">Below 1</span>
<div class="b" style="left:580.90px;top:398.40px;width:8.90px;height:8.60px;background:#9dbb6d;"></div>
<span class="t" style="left:599.30px;top:399px;font-size:7.3px;color:#222222;transform:scaleX(0.9276);-webkit-text-stroke:0.18px #222222;">At Grade</span>
<div class="b" style="left:580.90px;top:420.40px;width:8.90px;height:8.60px;background:#59a65d;"></div>
<span class="t" style="left:599.30px;top:421px;font-size:7.3px;color:#222222;transform:scaleX(0.9048);-webkit-text-stroke:0.18px #222222;">Above</span>
<span class="t" style="left:662.20px;top:377px;font-size:7.3px;color:#222222;transform:scaleX(1.0000);-webkit-text-stroke:0.18px #222222;">-</span>
<span class="t" style="left:659.60px;top:399px;font-size:7.3px;color:#222222;transform:scaleX(0.7750);-webkit-text-stroke:0.18px #222222;">41</span>
<span class="t" style="left:657.70px;top:421px;font-size:7.3px;color:#222222;transform:scaleX(0.9000);-webkit-text-stroke:0.18px #222222;">108</span>
<span class="t" style="left:702.60px;top:377px;font-size:7.3px;color:#222222;transform:scaleX(1.0000);-webkit-text-stroke:0.18px #222222;">-</span>
<span class="t" style="left:694.00px;top:399px;font-size:7.3px;color:#222222;transform:scaleX(0.9500);-webkit-text-stroke:0.18px #222222;">21 hrs</span>
<span class="t" style="left:694.00px;top:421px;font-size:7.3px;color:#222222;transform:scaleX(0.9500);-webkit-text-stroke:0.18px #222222;">43 hrs</span>
<div class="b" style="left:75.00px;top:442.00px;width:651.00px;height:1.90px;background:#cacaca;"></div>
<div class="b" style="left:76.00px;top:445.10px;width:650.00px;height:7.90px;background:#f7f7f7;"></div>
</div>
</body></html>
